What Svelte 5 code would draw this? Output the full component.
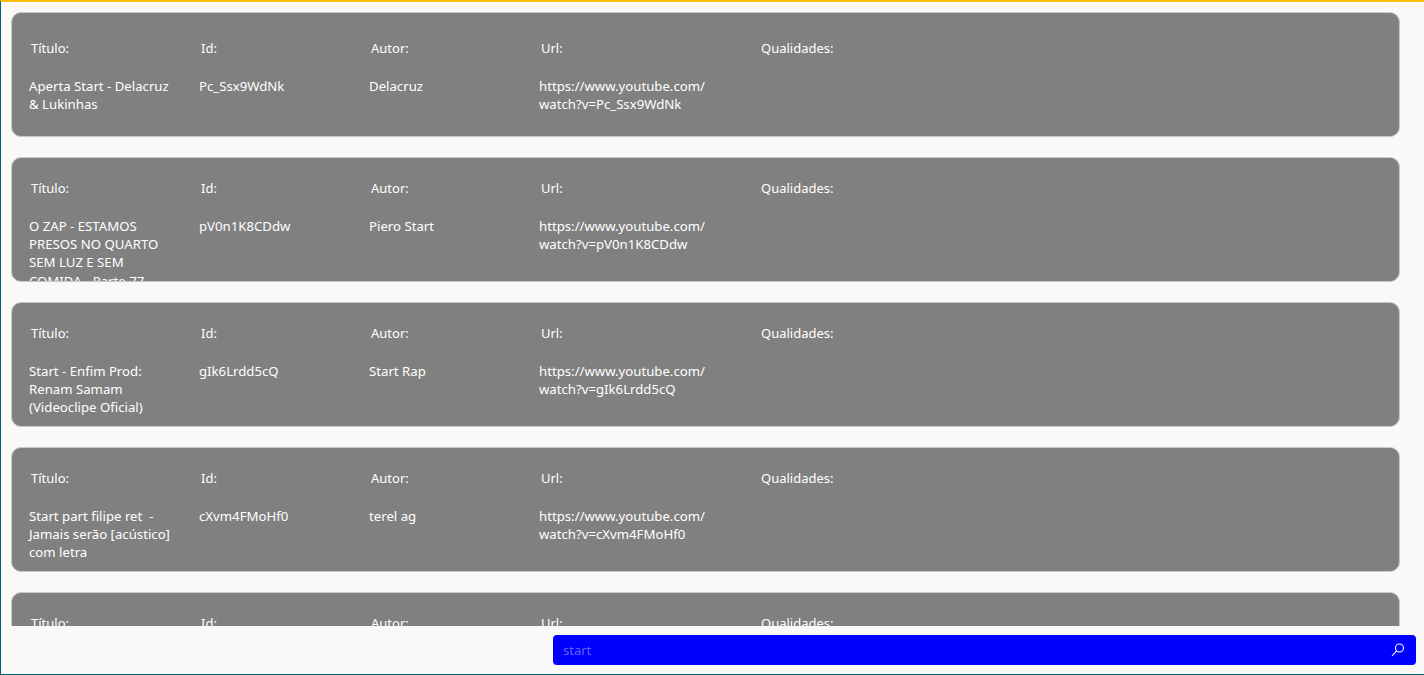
<script>
  const videos = [
    { title: "Aperta Start - Delacruz & Lukinhas", id: "Pc_Ssx9WdNk", author: "Delacruz" },
    { title: "O ZAP - ESTAMOS PRESOS NO QUARTO SEM LUZ E SEM COMIDA - Parte 77", id: "pV0n1K8CDdw", author: "Piero Start" },
    { title: "Start - Enfim Prod: Renam Samam (Videoclipe Oficial)", id: "gIk6Lrdd5cQ", author: "Start Rap" },
    { title: "Start part filipe ret\u00a0 - Jamais serão [acústico] com letra", id: "cXvm4FMoHf0", author: "terel ag" },
    { title: "Start", id: "", author: "" }
  ];
</script>

<main>
  <div class="results">
    {#each videos as video}
      <div class="card">
        <div class="row labels">
          <span>Título:</span>
          <span>Id:</span>
          <span>Autor:</span>
          <span>Url:</span>
          <span>Qualidades:</span>
        </div>
        <div class="row values">
          <span>{video.title}</span>
          <span>{video.id}</span>
          <span>{video.author}</span>
          <span>https://www.youtube.com/<wbr />watch?v={video.id}</span>
        </div>
      </div>
    {/each}
  </div>
  <div class="footer">
    <div class="search">
      <input type="text" placeholder="start" />
      <svg width="16" height="16" viewBox="0 0 16 16" fill="none" stroke="#fff" stroke-width="1.1">
        <circle cx="9.5" cy="6" r="4" />
        <path d="M6.6 8.9 L2 14" />
      </svg>
    </div>
  </div>
</main>

<style>
  :global(body) {
    margin: 0;
    overflow: hidden;
  }

  main {
    box-sizing: border-box;
    height: 675px;
    display: flex;
    flex-direction: column;
    background-color: #faf9f7;
    border-top: 2px solid #ffbe0a;
    border-left: 1px solid #006070;
    border-bottom: 1px solid #006070;
    font-family: "Noto Sans", "Open Sans", sans-serif;
    font-size: 13px;
    color: #fff;
  }

  .results {
    flex: 1;
    min-height: 0;
    overflow: hidden;
    padding: 10px 24px 0 10px;
    display: flex;
    flex-direction: column;
    gap: 20px;
  }

  .card {
    flex: none;
    box-sizing: border-box;
    height: 125px;
    overflow: hidden;
    background-color: #808080;
    border: 1px solid #c8c8c8;
    border-radius: 10px;
  }

  .row {
    display: grid;
    grid-template-columns: 170px 170px 170px 220px 1fr;
  }

  .labels {
    padding: 21px 0 0 19px;
    line-height: 18px;
  }

  .card:first-child .labels {
    padding-top: 26px;
  }

  .values {
    padding: 19.5px 0 0 17px;
    font-size: 13.2px;
    line-height: 18.4px;
  }

  .card:first-child .values {
    padding-top: 20px;
  }

  .values span {
    padding-right: 25px;
  }

  .footer {
    flex: none;
    height: 48px;
    display: flex;
    justify-content: flex-end;
    padding: 9px 8px 0 0;
    box-sizing: border-box;
  }

  .search {
    box-sizing: border-box;
    width: 863px;
    height: 30px;
    display: flex;
    align-items: center;
    padding: 0 10px;
    background-color: #0000ff;
    border-radius: 4px;
  }

  input {
    flex: 1;
    min-width: 0;
    border: none;
    outline: none;
    padding: 0;
    background: transparent;
    font: inherit;
    color: #fff;
  }

  input::placeholder {
    color: #6464f4;
    opacity: 1;
  }
</style>
